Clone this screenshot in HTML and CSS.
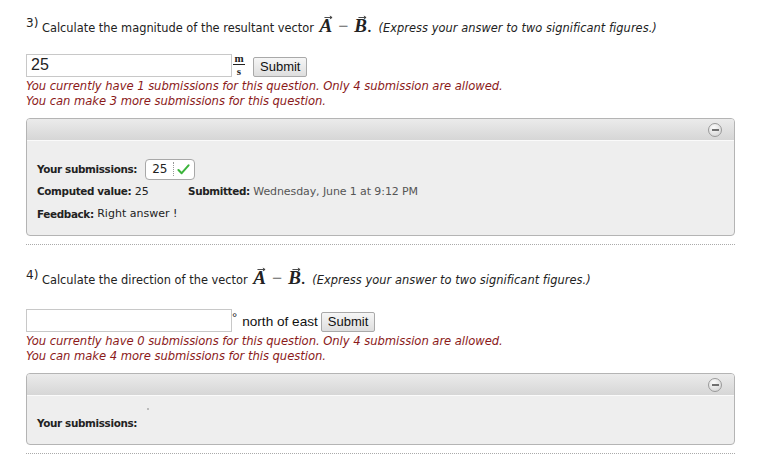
FILE: index.html
```html
<!DOCTYPE html>
<html>
<head>
<meta charset="utf-8">
<link rel="stylesheet" href="styles.css">
</head>
<body>
<div class="page">
  <section class="question">
    <div class="prompt"><sup class="num">3)</sup> Calculate the magnitude of the resultant vector <span class="math"><span class="vec"><svg class="arrow" viewBox="0 0 10 5"><path d="M0.5 2.5H8.5M6.5 0.8L9 2.5L6.5 4.2" fill="none" stroke="#222" stroke-width="0.9"/></svg><i>A</i></span><span class="op">−</span><span class="vec"><svg class="arrow" viewBox="0 0 10 5"><path d="M0.5 2.5H8.5M6.5 0.8L9 2.5L6.5 4.2" fill="none" stroke="#222" stroke-width="0.9"/></svg><i>B</i></span>.</span> <em class="hint">(Express your answer to two significant figures.)</em></div>
    <div class="answer-row">
      <input class="answer" type="text" value="25">
      <span class="frac"><span class="fn">m</span><span class="fd">s</span></span>
      <button class="submit">Submit</button>
    </div>
    <div class="notice">You currently have 1 submissions for this question. Only 4 submission are allowed.<br>You can make 3 more submissions for this question.</div>
    <div class="panel">
      <div class="panel-head"><span class="collapse"><span class="bar"></span></span></div>
      <div class="panel-body">
        <div class="row"><b>Your submissions:</b> <span class="bubble"><span class="val">25</span><span class="sep"></span><svg class="check" viewBox="0 0 14 12"><path d="M1.5 6.5L5 10L12.5 1.5" fill="none" stroke="#3bb43b" stroke-width="2.2" stroke-linecap="round" stroke-linejoin="round"/></svg></span></div>
        <div class="row"><span class="computed"><b>Computed value:</b> 25</span><span class="submitted"><b>Submitted:</b> <span class="date">Wednesday, June 1 at 9:12 PM</span></span></div>
        <div class="row"><b>Feedback:</b> Right answer !</div>
      </div>
    </div>
  </section>
  <hr class="divider">
  <section class="question q4">
    <div class="prompt"><sup class="num">4)</sup> Calculate the direction of the vector <span class="math"><span class="vec"><svg class="arrow" viewBox="0 0 10 5"><path d="M0.5 2.5H8.5M6.5 0.8L9 2.5L6.5 4.2" fill="none" stroke="#222" stroke-width="0.9"/></svg><i>A</i></span><span class="op">−</span><span class="vec"><svg class="arrow" viewBox="0 0 10 5"><path d="M0.5 2.5H8.5M6.5 0.8L9 2.5L6.5 4.2" fill="none" stroke="#222" stroke-width="0.9"/></svg><i>B</i></span>.</span> <em class="hint">(Express your answer to two significant figures.)</em></div>
    <div class="answer-row">
      <input class="answer" type="text" value="">
      <span class="deg">°</span>
      <span class="unit">north of east</span>
      <button class="submit">Submit</button>
    </div>
    <div class="notice">You currently have 0 submissions for this question. Only 4 submission are allowed.<br>You can make 4 more submissions for this question.</div>
    <div class="panel">
      <div class="panel-head"><span class="collapse"><span class="bar"></span></span></div>
      <div class="panel-body short">
        <div class="row"><b>Your submissions:</b> <span class="dot"></span></div>
      </div>
    </div>
  </section>
  <hr class="divider">
</div>
</body>
</html>
```
FILE: styles.css
```css
body {
  margin: 0;
  background: #fff;
  font-family: "DejaVu Sans", Tahoma, sans-serif;
  color: #222;
}
.page {
  padding: 17px 0 0 26px;
  width: 709px;
}
.prompt {
  font-size: 11.4px;
  line-height: 22px;
  height: 22px;
  color: #222;
}
.num {
  font-size: 12px;
  vertical-align: 5px;
  line-height: 0;
}
.math {
  font-family: "Liberation Serif", serif;
  font-size: 19px;
  line-height: 10px;
  margin-left: 2px;
}
.vec {
  position: relative;
  display: inline-block;
}
.vec i { font-style: italic; font-weight: bold; }
.arrow {
  position: absolute;
  width: 9px;
  height: 5px;
  left: 4px;
  top: -6px;
}
.op { color: #666; margin: 0 6px; font-size: 18px; }
.hint {
  font-style: italic;
  color: #222;
  margin-left: 3px;
  letter-spacing: 0.05px;
}
.answer-row {
  display: flex;
  align-items: center;
  margin-top: 14px;
  height: 24px;
}
.q4 .answer-row { margin-top: 17px; }
.answer {
  box-sizing: border-box;
  width: 206px;
  height: 23px;
  border: 1px solid #c8c8c8;
  padding: 0 4px;
  font-family: "Liberation Sans", Arial, sans-serif;
  font-size: 16px;
  color: #222;
  outline: none;
}
.frac {
  display: inline-flex;
  flex-direction: column;
  align-items: center;
  font-family: "Liberation Serif", serif;
  font-weight: bold;
  font-size: 11px;
  line-height: 8px;
  margin-left: 2px;
  margin-top: -2px;
  width: 10px;
}
.fn { border-bottom: 1px solid #222; padding: 0 1px 2px; }
.fd { padding-top: 2px; }
.submit {
  margin-left: 9px;
  height: 20px;
  padding: 0 6px;
  border: 1px solid #a9a9a9;
  border-radius: 2px;
  background: linear-gradient(#f6f6f6, #dedede);
  font-family: "Liberation Sans", Arial, sans-serif;
  font-size: 13px;
  color: #111;
  margin-top: 3px;
}
.deg {
  font-family: "Liberation Sans", Arial, sans-serif;
  font-size: 13px;
  align-self: flex-start;
  margin-left: 0;
  margin-top: 4px;
  line-height: 12px;
}
.unit {
  font-family: "Liberation Sans", Arial, sans-serif;
  font-size: 13.6px;
  margin-left: 5px;
  margin-top: 3px;
  color: #111;
}
.unit + .submit { margin-left: 3px; }
.notice {
  font-style: italic;
  color: #8b1a1a;
  font-size: 11.6px;
  line-height: 15px;
  letter-spacing: -0.05px;
  margin-top: 2px;
}
.panel {
  margin-top: 9px;
  border: 1px solid #b4b4b4;
  border-radius: 4px;
  background: #eeeeee;
  overflow: hidden;
}
.panel-head {
  height: 21px;
  background: linear-gradient(#ebebeb, #d6d6d6);
  border-bottom: 1px solid #fafafa;
  display: flex;
  align-items: center;
  justify-content: flex-end;
  padding-right: 12px;
}
.collapse {
  box-sizing: border-box;
  width: 14px;
  height: 14px;
  border-radius: 50%;
  border: 1px solid #9a9a9a;
  background: radial-gradient(circle at 40% 30%, #fbfbfb, #d0d0d0);
  display: flex;
  align-items: center;
  justify-content: center;
}
.bar { width: 7px; height: 2px; background: #707070; }
.panel-body {
  padding: 17px 10px 10px;
  font-size: 11px;
  color: #222;
}
.panel-body.short { padding: 16px 10px 10px; }
.row {
  display: flex;
  align-items: center;
  line-height: 22px;
  white-space: pre;
}
.row b {
  font-weight: bold;
  font-size: 10.4px;
  letter-spacing: -0.35px;
}
.bubble {
  display: inline-flex;
  align-items: center;
  height: 21px;
  box-sizing: border-box;
  border: 1px solid #a8a8a8;
  border-radius: 4px;
  background: #fff;
  padding: 0 4px 0 6px;
  margin-left: 8px;
  font-size: 12px;
}
.sep {
  width: 0;
  height: 14px;
  border-left: 1px dotted #999;
  margin: 0 3px 0 6px;
}
.check { width: 13px; height: 11px; }
.computed { width: 151px; }
.date { color: #555; letter-spacing: -0.1px; }
.dot {
  width: 2px;
  height: 2px;
  background: #bbb;
  margin-left: 10px;
  align-self: flex-start;
  margin-top: -4px;
}
.divider {
  border: 0;
  border-top: 1px dotted #aaa;
  margin: 8px 0 24px;
}
```
